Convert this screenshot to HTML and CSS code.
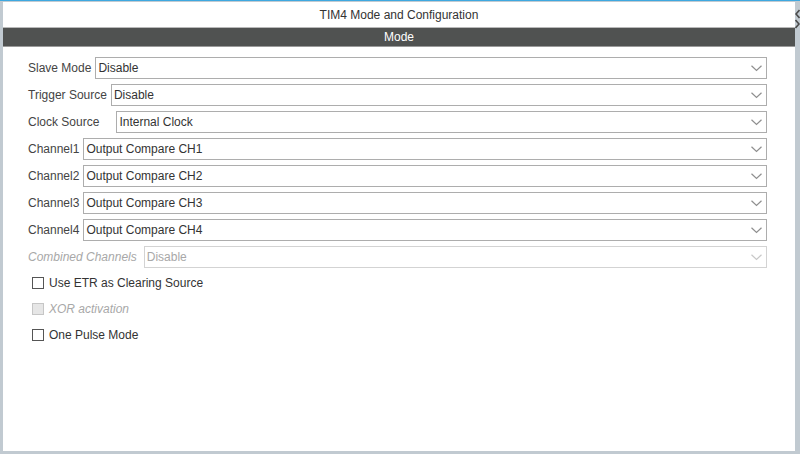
FILE: index.html
```html
<!DOCTYPE html>
<html>
<head>
<meta charset="utf-8">
<link rel="stylesheet" href="styles.css">
</head>
<body>
<div class="frame">
  <div class="panel">
    <div class="title">TIM4 Mode and Configuration</div>
    <div class="bar">Mode</div>
    <div class="form">
      <div class="row"><span class="label">Slave Mode</span><div class="select"><span class="value">Disable</span><svg class="chev" width="11" height="7" viewBox="0 0 11 7"><polyline points="0.5,0.8 5.5,5.5 10.5,0.8" fill="none" stroke="#8f8f8f" stroke-width="1.2"/></svg></div></div>
      <div class="row"><span class="label">Trigger Source</span><div class="select"><span class="value">Disable</span><svg class="chev" width="11" height="7" viewBox="0 0 11 7"><polyline points="0.5,0.8 5.5,5.5 10.5,0.8" fill="none" stroke="#8f8f8f" stroke-width="1.2"/></svg></div></div>
      <div class="row"><span class="label wide">Clock Source</span><div class="select"><span class="value">Internal Clock</span><svg class="chev" width="11" height="7" viewBox="0 0 11 7"><polyline points="0.5,0.8 5.5,5.5 10.5,0.8" fill="none" stroke="#8f8f8f" stroke-width="1.2"/></svg></div></div>
      <div class="row"><span class="label">Channel1</span><div class="select"><span class="value">Output Compare CH1</span><svg class="chev" width="11" height="7" viewBox="0 0 11 7"><polyline points="0.5,0.8 5.5,5.5 10.5,0.8" fill="none" stroke="#8f8f8f" stroke-width="1.2"/></svg></div></div>
      <div class="row"><span class="label">Channel2</span><div class="select"><span class="value">Output Compare CH2</span><svg class="chev" width="11" height="7" viewBox="0 0 11 7"><polyline points="0.5,0.8 5.5,5.5 10.5,0.8" fill="none" stroke="#8f8f8f" stroke-width="1.2"/></svg></div></div>
      <div class="row"><span class="label">Channel3</span><div class="select"><span class="value">Output Compare CH3</span><svg class="chev" width="11" height="7" viewBox="0 0 11 7"><polyline points="0.5,0.8 5.5,5.5 10.5,0.8" fill="none" stroke="#8f8f8f" stroke-width="1.2"/></svg></div></div>
      <div class="row"><span class="label">Channel4</span><div class="select"><span class="value">Output Compare CH4</span><svg class="chev" width="11" height="7" viewBox="0 0 11 7"><polyline points="0.5,0.8 5.5,5.5 10.5,0.8" fill="none" stroke="#8f8f8f" stroke-width="1.2"/></svg></div></div>
      <div class="row disabled"><span class="label">Combined Channels</span><div class="select"><span class="value">Disable</span><svg class="chev" width="11" height="7" viewBox="0 0 11 7"><polyline points="0.5,0.8 5.5,5.5 10.5,0.8" fill="none" stroke="#c8c8c8" stroke-width="1.2"/></svg></div></div>
      <div class="checks">
        <div class="check"><span class="box"></span><span class="ctext">Use ETR as Clearing Source</span></div>
        <div class="check disabled"><span class="box"></span><span class="ctext">XOR activation</span></div>
        <div class="check"><span class="box"></span><span class="ctext">One Pulse Mode</span></div>
      </div>
    </div>
  </div>
  <div class="splitter">
    <svg width="5" height="20" viewBox="0 0 5 20"><polyline points="4.5,1 1,5 4.5,9" fill="none" stroke="#4a4a4a" stroke-width="1.6"/><polyline points="0.5,11 4,15 0.5,19" fill="none" stroke="#4a4a4a" stroke-width="1.6"/></svg>
  </div>
</div>
</body>
</html>
```

FILE: styles.css
```css
html, body {
  margin: 0;
  padding: 0;
}
body {
  width: 800px;
  height: 454px;
  overflow: hidden;
  font-family: "Liberation Sans", Arial, sans-serif;
  font-size: 12px;
  color: #3a3a3a;
}
.frame {
  width: 800px;
  height: 454px;
  box-sizing: border-box;
  background: #c1cad1;
  border-top: 1px solid #3ea8e0;
  padding: 1px 0 3px 3px;
  display: flex;
}
.panel {
  width: 792px;
  background: #ffffff;
  display: flex;
  flex-direction: column;
}
.title {
  height: 25px;
  line-height: 26px;
  text-align: center;
  color: #333;
  border-bottom: 1px solid #b9b9b9;
}
.bar {
  height: 18px;
  line-height: 19px;
  background: #505251;
  color: #ffffff;
  text-align: center;
  border-bottom: 1px solid #9a9a9a;
}
.form {
  padding: 10px 28px 0 25px;
  display: flex;
  flex-direction: column;
  gap: 5px;
}
.row {
  display: flex;
  align-items: center;
  height: 22px;
}
.label {
  color: #444;
  margin-right: 4px;
  white-space: nowrap;
}
.label.wide {
  margin-right: 17px;
}
.select {
  flex: 1;
  height: 22px;
  box-sizing: border-box;
  border: 1px solid #adadad;
  display: flex;
  align-items: center;
  justify-content: space-between;
  padding: 0 4px 0 2px;
  color: #333;
}
.chev {
  display: block;
  margin-top: 1px;
}
.row.disabled .label {
  color: #a8a8a8;
  font-style: italic;
  margin-right: 7px;
}
.row.disabled .select {
  border-color: #d3d3d3;
  color: #a8a8a8;
}
.checks {
  display: flex;
  flex-direction: column;
  padding-left: 4px;
  padding-top: 1px;
  gap: 8px;
}
.check {
  display: flex;
  align-items: center;
  height: 18px;
}
.box {
  width: 10px;
  height: 10px;
  border: 1px solid #555;
  background: #fff;
  margin-right: 5px;
}
.ctext {
  color: #333;
}
.check.disabled .box {
  border-color: #c6c6c6;
  background: #e6e6e6;
}
.check.disabled .ctext {
  color: #a8a8a8;
  font-style: italic;
}
.splitter {
  flex: 1;
  display: flex;
  flex-direction: column;
  align-items: center;
  padding-top: 7px;
}
```
